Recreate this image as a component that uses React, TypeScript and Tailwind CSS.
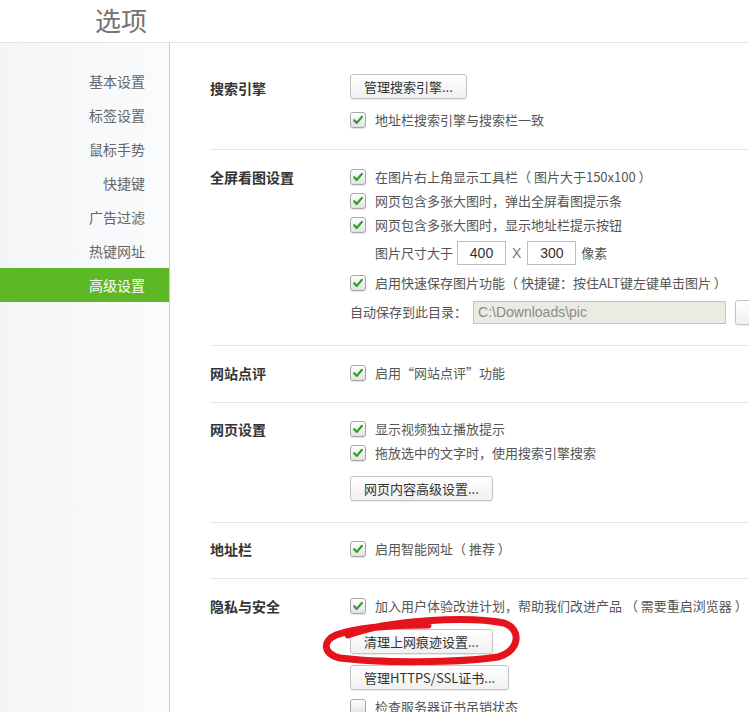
import React from 'react';

const navItems = ['基本设置', '标签设置', '鼠标手势', '快捷键', '广告过滤', '热键网址', '高级设置'];

const CheckBox: React.FC<{ checked?: boolean }> = ({ checked = true }) => (
    <div className="w-4 h-4 shrink-0 rounded-[3px] border border-[#a8a8a8] bg-gradient-to-b from-white to-[#e2e2e2] shadow-[0_1px_1px_rgba(0,0,0,0.12)] flex items-center justify-center">
        {checked && (
            <svg width="12" height="12" viewBox="0 0 12 12">
                <path d="M2.2 6.2 L4.8 8.9 L9.9 2.9" fill="none" stroke="#2c9a2c" strokeWidth="2.2" strokeLinecap="round" strokeLinejoin="round" />
            </svg>
        )}
    </div>
);

const CheckRow: React.FC<{ label: string; checked?: boolean; className?: string }> = ({ label, checked, className = '' }) => (
    <div className={`h-6 flex items-center gap-[9px] whitespace-nowrap ${className}`}>
        <CheckBox checked={checked} />
        <span>{label}</span>
    </div>
);

const Btn: React.FC<{ children: React.ReactNode; className?: string }> = ({ children, className = '' }) => (
    <button className={`h-[25px] px-[13px] shrink-0 rounded-[3px] border border-[#c4c4c4] bg-gradient-to-b from-white to-[#f0f0f0] shadow-[0_1px_1px_rgba(0,0,0,0.08)] text-[13px] text-[#333] whitespace-nowrap leading-[23px] ${className}`}>
        {children}
    </button>
);

const Section: React.FC<{ title: string; className?: string; titleClass?: string; children: React.ReactNode }> = ({
    title,
    className = '',
    titleClass = '',
    children,
}) => (
    <div className={`flex border-b border-[#e6e6e6] ${className}`}>
        <div className={`w-[140px] shrink-0 h-6 leading-6 text-[14px] font-bold text-[#333] ${titleClass}`}>{title}</div>
        <div className="flex flex-col items-start text-[13px] text-[#555]">{children}</div>
    </div>
);

export default function App() {
    return (
        <div className="relative min-h-screen w-full overflow-hidden bg-white font-['Noto_Sans_CJK_SC',sans-serif]">
            {/* Title bar */}
            <div className="h-[43px] border-b border-[#e4e4e4] pl-[95px]">
                <h1 className="text-[26px] leading-[40px] text-[#737373]">选项</h1>
            </div>

            <div className="flex">
                {/* Left nav */}
                <div className="w-[170px] shrink-0 min-h-[669px] pt-[21px] border-r border-[#cccccc] bg-gradient-to-r from-[#f3f5f7] to-[#fafbfc]">
                    {navItems.map((item) => {
                        const active = item === '高级设置';
                        return (
                            <div
                                key={item}
                                className={`h-[34px] flex items-center justify-end pr-[24px] text-[14px] ${
                                    active ? 'bg-[#5cb825] text-white' : 'text-[#666]'
                                }`}
                            >
                                {item}
                            </div>
                        );
                    })}
                </div>

                {/* Settings */}
                <div className="flex-1 min-w-0 pl-[40px]">
                    <Section title="搜索引擎" className="pt-[31px] pb-[17px]" titleClass="mt-[2px]">
                        <Btn>管理搜索引擎...</Btn>
                        <CheckRow label="地址栏搜索引擎与搜索栏一致" className="mt-[9px]" />
                    </Section>

                    <Section title="全屏看图设置" className="pt-[15px] pb-[16px]">
                        <CheckRow label="在图片右上角显示工具栏（ 图片大于150x100 ）" />
                        <CheckRow label="网页包含多张大图时，弹出全屏看图提示条" />
                        <CheckRow label="网页包含多张大图时，显示地址栏提示按钮" />
                        <div className="h-8 flex items-center pl-[25px] whitespace-nowrap">
                            <span>图片尺寸大于</span>
                            <input
                                readOnly
                                value="400"
                                className="ml-[4px] w-[49px] h-[24px] border border-[#bdbdbd] text-center text-[14px] text-[#333] font-['Liberation_Sans',sans-serif] outline-none"
                            />
                            <span className="mx-[6px] text-[14px] text-[#777] font-['Liberation_Sans',sans-serif]">X</span>
                            <input
                                readOnly
                                value="300"
                                className="w-[49px] h-[24px] border border-[#bdbdbd] text-center text-[14px] text-[#333] font-['Liberation_Sans',sans-serif] outline-none"
                            />
                            <span className="ml-[5px]">像素</span>
                        </div>
                        <CheckRow label="启用快速保存图片功能（ 快捷键：按住ALT键左键单击图片 ）" className="mt-[2px]" />
                        <div className="h-[34px] flex items-center whitespace-nowrap">
                            <span>自动保存到此目录：</span>
                            <input
                                readOnly
                                disabled
                                value="C:\Downloads\pic"
                                className="ml-[6px] w-[253px] h-[23px] px-[4px] border border-[#c6c6c0] bg-[#ebebe4] text-[14px] text-[#8a8a8a] font-['Liberation_Sans',sans-serif] outline-none"
                            />
                            <Btn className="ml-[9px]">更改...</Btn>
                        </div>
                    </Section>

                    <Section title="网站点评" className="pt-[15px] pb-[17px]">
                        <CheckRow label="启用“网站点评”功能" />
                    </Section>

                    <Section title="网页设置" className="pt-[14px] pb-[21px]">
                        <CheckRow label="显示视频独立播放提示" />
                        <CheckRow label="拖放选中的文字时，使用搜索引擎搜索" />
                        <Btn className="mt-[11px]">网页内容高级设置...</Btn>
                    </Section>

                    <Section title="地址栏" className="pt-[14px] pb-[17px]">
                        <CheckRow label="启用智能网址（ 推荐 ）" />
                    </Section>

                    <Section title="隐私与安全" className="pt-[15px] pb-[20px] border-b-0">
                        <CheckRow label="加入用户体验改进计划，帮助我们改进产品 （ 需要重启浏览器 ）" />
                        <Btn className="mt-[11px]">清理上网痕迹设置...</Btn>
                        <Btn className="mt-[11px]">管理HTTPS/SSL证书...</Btn>
                        <CheckRow label="检查服务器证书吊销状态" checked={false} className="mt-[5px]" />
                    </Section>
                </div>
            </div>

            {/* Red marker loop drawn over the clear-history button */}
            <svg className="absolute left-[318px] top-[613px] pointer-events-none" width="206" height="54" viewBox="0 0 206 54">
                <path
                    d="M30 22 C70 7 150 3 186 10 C204 16 202 38 180 44 C140 50 60 50 22 45 C5 41 4 28 18 22 C40 14 80 12 110 12"
                    fill="none"
                    stroke="#e5131b"
                    strokeWidth="7"
                    strokeLinecap="round"
                    strokeLinejoin="round"
                />
            </svg>
        </div>
    );
}
